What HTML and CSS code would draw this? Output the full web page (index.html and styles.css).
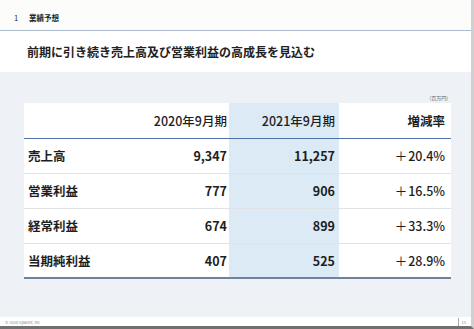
FILE: index.html
```html
<!DOCTYPE html>
<html lang="ja">
<head>
<meta charset="utf-8">
<title>業績予想</title>
<link rel="stylesheet" href="styles.css">
</head>
<body>
<div class="page">
  <header class="topbar"><span class="num">1</span><span class="sec">業績予想</span></header>
  <h1 class="title">前期に引き続き売上高及び営業利益の高成長を見込む</h1>
  <section class="panel">
    <div class="unit">(百万円)</div>
    <table class="fin">
      <thead>
        <tr><th class="lbl"></th><th class="c1">2020年9月期</th><th class="c2">2021年9月期</th><th class="c3">増減率</th></tr>
      </thead>
      <tbody>
        <tr><td class="lbl">売上高</td><td class="c1">9,347</td><td class="c2">11,257</td><td class="c3"><span class="plus">＋</span>20.4%</td></tr>
        <tr><td class="lbl">営業利益</td><td class="c1">777</td><td class="c2">906</td><td class="c3"><span class="plus">＋</span>16.5%</td></tr>
        <tr><td class="lbl">経常利益</td><td class="c1">674</td><td class="c2">899</td><td class="c3"><span class="plus">＋</span>33.3%</td></tr>
        <tr><td class="lbl">当期純利益</td><td class="c1">407</td><td class="c2">525</td><td class="c3"><span class="plus">＋</span>28.9%</td></tr>
      </tbody>
    </table>
  </section>
  <footer class="foot"><span class="copy">© 2020 Spacee, Inc</span><span class="pg">15</span></footer>
</div>
</body>
</html>
```
FILE: styles.css
```css
* { box-sizing: border-box; margin: 0; padding: 0; }
html, body { background: #ffffff; }
body {
  font-family: "Noto Sans CJK JP", "Noto Sans", sans-serif;
  color: #1e1e1e;
}
.page {
  width: 474px;
  height: 329px;
  border-right: 3px solid #d0d0d0;
  border-bottom: 3px solid #707070;
  display: flex;
  flex-direction: column;
}
.topbar {
  height: 31px;
  background: #fcfcfa;
  border-bottom: 1.5px solid #a9bbcd;
  display: flex;
  align-items: center;
  padding: 4px 0 0 14px;
  font-size: 7.5px;
  font-weight: 700;
  color: #222;
}
.topbar .num { font-weight: 400; width: 15px; }
.title {
  height: 41px;
  display: flex;
  align-items: center;
  padding-left: 27px;
  font-size: 12px;
  font-weight: 700;
  color: #222;
  background: #ffffff;
}
.panel {
  height: 245px;
  background: #eef2f6;
  padding: 20px 20px 0 24px;
}
.unit {
  height: 11px;
  line-height: 11px;
  text-align: right;
  padding-right: 3px;
  font-size: 5px;
  color: #666;
}
.fin {
  width: 427px;
  border-collapse: collapse;
  background: #ffffff;
  table-layout: fixed;
  border-bottom: 2px solid #6e829b;
}
.fin th, .fin td {
  height: 35px;
  text-align: right;
  white-space: nowrap;
  font-size: 12.5px;
}
.fin th {
  font-weight: 500;
  border-bottom: 1.5px solid #4f72a6;
}
.fin td {
  font-weight: 700;
  border-bottom: 1px solid #dfe3e8;
}
.fin tbody tr:last-child td { border-bottom: none; }
.fin .lbl { width: 95px; text-align: left; padding-left: 4px; }
.fin .c1 { width: 110px; padding-right: 2px; }
.fin .c2 { width: 110px; padding-right: 4px; background: #dbeaf5; }
.fin .c3 { width: 112px; padding-right: 6px; }
.fin th.c3 { font-weight: 700; }
.fin td.c3 { font-weight: 500; }
.plus { font-weight: 400; margin-right: 1px; }
.foot {
  flex: 1;
  display: flex;
  align-items: center;
  justify-content: space-between;
  padding: 0 5px 0 5px;
  font-size: 4px;
  color: #8a8a8a;
}
.pg {
  border-left: 0.6px solid #aaa;
  padding-left: 3px;
  line-height: 8px;
}
```
